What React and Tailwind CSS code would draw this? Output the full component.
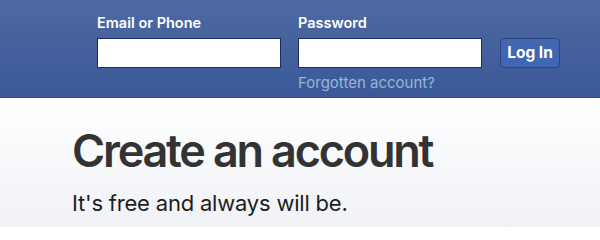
export default function App() {
  return (
    <div className="w-[600px] h-[227px] overflow-hidden font-['Inter',sans-serif]">
      <div className="h-[98px] bg-linear-to-b from-[#4e69a2] to-[#3b5998] border-b border-[#2a4887]">
        <div className="flex pl-[97px] pt-[13px]">
          <div className="w-[184px]">
            <label className="block text-[14.5px] font-semibold leading-[20px] text-white">Email or Phone</label>
            <input className="mt-[5px] block h-[30px] w-full border border-[#1d2a5b] bg-white outline-none" />
          </div>
          <div className="ml-[17px] w-[184px]">
            <label className="block text-[14.5px] font-semibold leading-[20px] text-white">Password</label>
            <input type="password" className="mt-[5px] block h-[30px] w-full border border-[#1d2a5b] bg-white outline-none" />
            <a className="mt-[6px] block text-[15px] leading-[18px] text-[#9cb4d8]">Forgotten account?</a>
          </div>
          <div className="ml-[18px] pt-[25px]">
            <button className="h-[30px] w-[60px] rounded-sm border border-[#29487d] bg-[#4267b2] text-[15.5px] font-bold text-white">
              Log In
            </button>
          </div>
        </div>
      </div>
      <div className="h-[129px] bg-linear-to-b from-white to-[#f0f2f6] pl-[72px] pt-[30px]">
        <h1 className="text-[45px] font-semibold leading-none tracking-[-2.2px] text-[#333]">Create an account</h1>
        <p className="mt-[16px] text-[22px] leading-[28px] tracking-[-0.2px] text-[#1c1e21]">It's free and always will be.</p>
      </div>
    </div>
  );
}
